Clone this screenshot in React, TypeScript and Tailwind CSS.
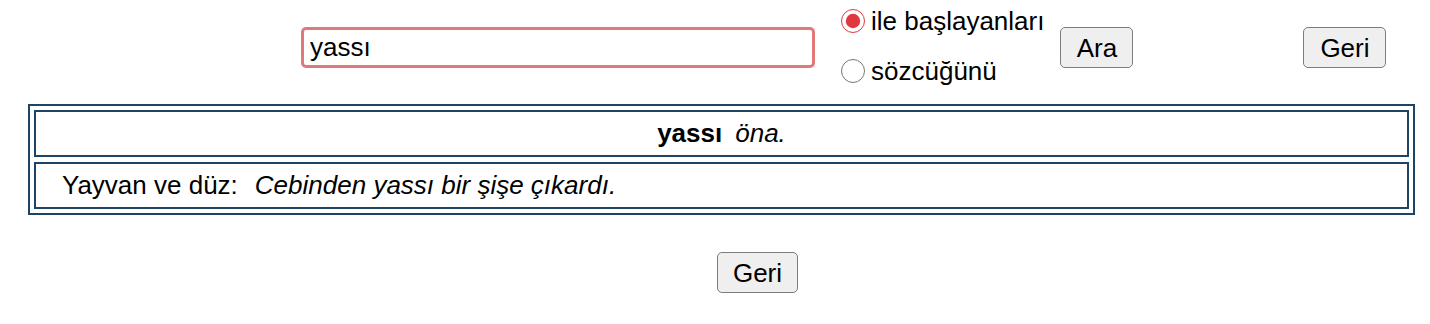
import { useState } from "react";

export default function App() {
  const [query, setQuery] = useState("yassı");
  const [mode, setMode] = useState<"bas" | "soz">("bas");

  const btn =
    "h-[41px] rounded-[5px] border-[1.5px] border-[#7c7c7c] bg-[#efefef] text-[26px] leading-none text-black";

  return (
    <div className="min-h-screen bg-white font-['Liberation_Sans',Arial,sans-serif] text-black">
      {/* search form */}
      <div className="flex h-[104px] items-start">
        <input
          value={query}
          onChange={(e) => setQuery(e.target.value)}
          className="ml-[301px] mt-[27px] h-[41px] w-[514px] rounded-[5px] border-[3px] border-[#e07a7a] px-[6px] text-[26px] outline-none"
        />
        <div className="ml-[26px] flex flex-col gap-[28px] pt-[10px]">
          <label className="flex h-[22px] items-center gap-[6px] text-[26px]">
            <input
              type="radio"
              name="mode"
              checked={mode === "bas"}
              onChange={() => setMode("bas")}
              className="m-0 h-[24px] w-[24px] accent-[#e0383f]"
            />
            ile başlayanları
          </label>
          <label className="flex h-[22px] items-center gap-[6px] text-[26px]">
            <input
              type="radio"
              name="mode"
              checked={mode === "soz"}
              onChange={() => setMode("soz")}
              className="m-0 h-[24px] w-[24px] accent-[#e0383f]"
            />
            sözcüğünü
          </label>
        </div>
        <button className={`${btn} ml-[16px] mt-[27px] w-[73px]`}>Ara</button>
        <button className={`${btn} ml-[170px] mt-[27px] w-[83px]`}>Geri</button>
      </div>

      {/* result table */}
      <div className="ml-[28px] flex w-[1387px] flex-col gap-[5px] border-2 border-[#1d4466] p-[4px]">
        <div className="flex h-[47px] items-center justify-center border-2 border-[#1d4466] text-[26px]">
          <b>yassı</b>
          <i className="ml-[13px]">öna.</i>
        </div>
        <div className="flex h-[47px] items-center border-2 border-[#1d4466] pl-[26px] text-[26px]">
          <span>Yayvan ve düz:</span>
          <i className="ml-[17px]">Cebinden yassı bir şişe çıkardı.</i>
        </div>
      </div>

      <div className="mt-[37px] flex">
        <button className={`${btn} ml-[717px] w-[81px]`}>Geri</button>
      </div>
    </div>
  );
}
